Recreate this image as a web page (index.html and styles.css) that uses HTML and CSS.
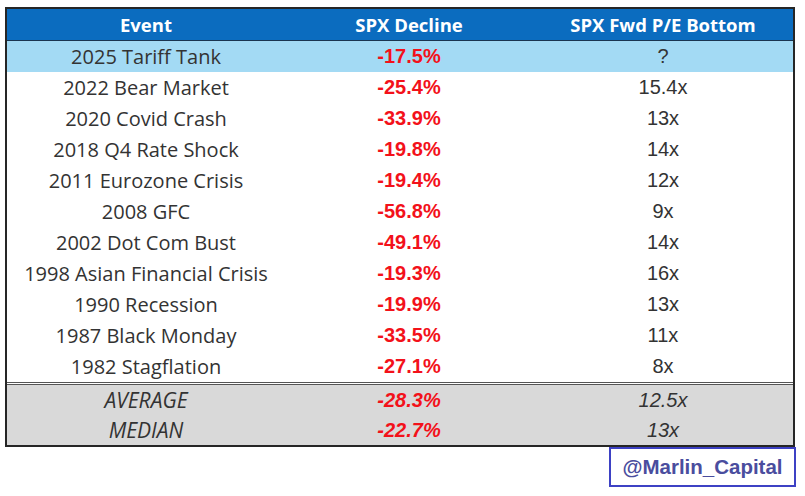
FILE: index.html
```html
<!DOCTYPE html>
<html>
<head>
<meta charset="utf-8">
<link rel="stylesheet" href="styles.css">
</head>
<body>
<div class="page">
  <div class="table">
    <div class="row head">
      <div class="c1">Event</div>
      <div class="c2">SPX Decline</div>
      <div class="c3">SPX Fwd P/E Bottom</div>
    </div>
    <div class="row hl">
      <div class="c1">2025 Tariff Tank</div>
      <div class="c2 red">-17.5%</div>
      <div class="c3">?</div>
    </div>
    <div class="row"><div class="c1">2022 Bear Market</div><div class="c2 red">-25.4%</div><div class="c3">15.4x</div></div>
    <div class="row"><div class="c1">2020 Covid Crash</div><div class="c2 red">-33.9%</div><div class="c3">13x</div></div>
    <div class="row"><div class="c1">2018 Q4 Rate Shock</div><div class="c2 red">-19.8%</div><div class="c3">14x</div></div>
    <div class="row"><div class="c1">2011 Eurozone Crisis</div><div class="c2 red">-19.4%</div><div class="c3">12x</div></div>
    <div class="row"><div class="c1">2008 GFC</div><div class="c2 red">-56.8%</div><div class="c3">9x</div></div>
    <div class="row"><div class="c1">2002 Dot Com Bust</div><div class="c2 red">-49.1%</div><div class="c3">14x</div></div>
    <div class="row"><div class="c1">1998 Asian Financial Crisis</div><div class="c2 red">-19.3%</div><div class="c3">16x</div></div>
    <div class="row"><div class="c1">1990 Recession</div><div class="c2 red">-19.9%</div><div class="c3">13x</div></div>
    <div class="row"><div class="c1">1987 Black Monday</div><div class="c2 red">-33.5%</div><div class="c3">11x</div></div>
    <div class="row last"><div class="c1">1982 Stagflation</div><div class="c2 red">-27.1%</div><div class="c3">8x</div></div>
    <div class="summary">
      <div class="row sum"><div class="c1">AVERAGE</div><div class="c2 red">-28.3%</div><div class="c3">12.5x</div></div>
      <div class="row sum"><div class="c1">MEDIAN</div><div class="c2 red">-22.7%</div><div class="c3">13x</div></div>
    </div>
  </div>
  <div class="mark-wrap"><div class="mark">@Marlin_Capital</div></div>
</div>
</body>
</html>
```
FILE: styles.css
```css
html, body { margin: 0; padding: 0; background: #fff; }
.page { padding: 7px 10px 0 5px; width: 790px; }
.table { border: 2px solid #262626; }
.row {
  display: grid;
  grid-template-columns: 278px 248px 1fr;
  height: 31px;
  align-items: center;
  text-align: center;
  font-family: "Open Sans", sans-serif;
  font-size: 20px;
  color: #333;
}
.row .c3 { font-family: "Liberation Sans", Arial, sans-serif; font-size: 20px; }
.row.head {
  background: #0b6cbf;
  color: #fff;
  font-weight: 700;
  font-size: 18.5px;
  height: 31px;
  border-bottom: 1px solid #1a3550;
}
.row.head .c3 { font-family: "Open Sans", sans-serif; font-size: 18.5px; }
.row.head .c2 { font-size: 18.5px; }
.row.hl { background: #a3daf4; }
.red { color: #f3111a; font-family: "Liberation Sans", Arial, sans-serif; font-weight: 700; font-size: 20px; }
.row.last { border-bottom: 3px double #555; }
.summary { background: #d9d9d9; }
.row.sum { height: 30px; font-style: italic; }
.row.sum .c1 { font-size: 21px; }
.mark-wrap { display: flex; justify-content: flex-end; margin-right: -1px; }
.mark {
  width: 183px;
  height: 36px;
  border: 2px solid #3d41c4;
  display: flex;
  align-items: center;
  justify-content: center;
  font-family: "Liberation Sans", Arial, sans-serif;
  font-weight: 700;
  font-size: 20.5px;
  color: #4a4d9e;
}
```
